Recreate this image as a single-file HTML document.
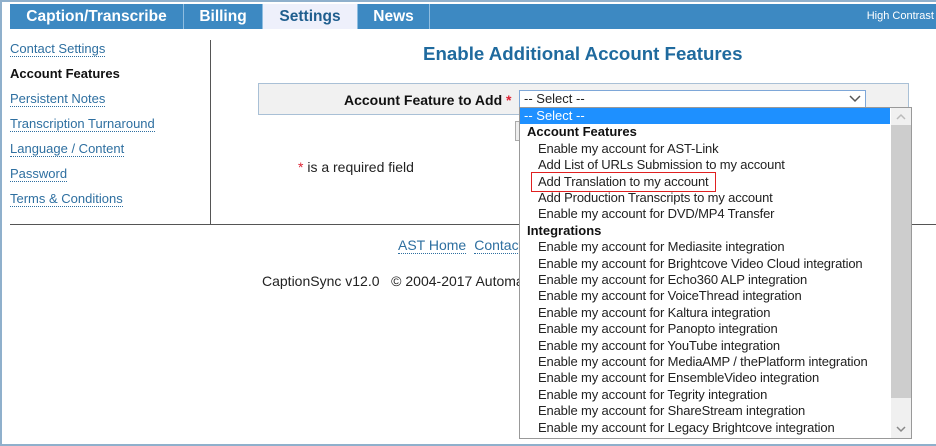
<!DOCTYPE html>
<html><head><style>
*{margin:0;padding:0;box-sizing:border-box}
body{width:936px;height:446px;overflow:hidden;background:#fff;font-family:"Liberation Sans",Arial,sans-serif;position:relative}
.frame{position:absolute;left:0;top:0;width:936px;height:446px;border:2px solid #8fb0cc;border-right:none}
.nav{position:absolute;left:10px;top:4px;width:926px;height:25px;background:#3d89c2}
.tab{position:absolute;top:0;height:25px;color:#fff;font-weight:bold;font-size:15.5px;line-height:25px;text-align:center;border-right:1px solid #8fbde0}
.tab.sel{background:#eef0fb;color:#1f5e8e}
.hc{position:absolute;right:2px;top:0;line-height:25px;color:#fff;font-size:11px}
.side{position:absolute;left:10px;font-size:13px;color:#2e6fa0;border-bottom:1px dotted #2e6fa0;line-height:14px}
.vline{position:absolute;left:210px;top:40px;width:1px;height:184px;background:#555}
.hline{position:absolute;left:10px;top:224px;width:926px;height:1px;background:#555}
h1{position:absolute;left:423px;top:43px;font-size:18.7px;color:#1f6a9e;font-weight:bold}
.fbox{position:absolute;left:258px;top:83px;width:651px;height:32px;background:#f1f1f1;border:1px solid #a9c0d6}
.lbl{position:absolute;left:344px;top:92px;font-size:14px;font-weight:bold;color:#111}
.star{color:#d23}
.sel1{position:absolute;left:519px;top:90px;width:347px;height:18px;border:1px solid #7ea7d8;background:#fff;font-size:13px;line-height:16px;padding-left:4px;color:#222}
.btn{position:absolute;left:515px;top:121px;width:6px;height:20px;border:1px solid #aaa;background:#eee}
.req{position:absolute;left:298px;top:159px;font-size:14px;color:#222}
.foot1{position:absolute;left:398px;top:237px;font-size:14px;color:#2e6fa0}
.foot1 span{border-bottom:1px dotted #2e6fa0;margin-right:8px}
.foot2{position:absolute;left:262px;top:273px;font-size:14px;color:#222}
.dd{position:absolute;left:519px;top:107px;width:393px;height:332px;background:#fff;border:1px solid #999}
.row{position:absolute;left:0;height:16.4px;font-size:13px;line-height:16px;color:#222;white-space:nowrap;letter-spacing:-0.15px}
.row.g{font-weight:bold;padding-left:7px;color:#111;letter-spacing:0}
.row.i{padding-left:18px}
.row.h{background:#1e90ff;color:#fff;padding-left:4px;width:370px;letter-spacing:0}
.sb{position:absolute;left:371px;top:0;width:20px;height:330px;background:#f0f0f0}
.th{position:absolute;left:371px;top:17px;width:20px;height:273px;background:#cdcdcd}
.redbox{position:absolute;left:531px;top:172px;width:185px;height:20px;border:1.5px solid #e02020}
</style></head><body>
<div class="frame"></div>
<div class="nav">
<div class="tab" style="left:0;width:174px">Caption/Transcribe</div>
<div class="tab" style="left:174px;width:79px">Billing</div>
<div class="tab sel" style="left:253px;width:95px">Settings</div>
<div class="tab" style="left:348px;width:72px">News</div>
<div class="hc">High Contrast</div>
</div>
<div class="side" style="top:42px">Contact Settings</div>
<div class="side" style="top:67px;color:#111;font-weight:bold;border:none">Account Features</div>
<div class="side" style="top:92px">Persistent Notes</div>
<div class="side" style="top:117px">Transcription Turnaround</div>
<div class="side" style="top:142px">Language / Content</div>
<div class="side" style="top:167px">Password</div>
<div class="side" style="top:192px">Terms &amp; Conditions</div>
<div class="vline"></div><div class="hline"></div>
<h1>Enable Additional Account Features</h1>
<div class="fbox"></div>
<div class="lbl">Account Feature to Add <span class="star">*</span></div>
<div class="sel1">-- Select --<svg style="position:absolute;right:4px;top:4px" width="12" height="8"><path d="M1 1 L6 6 L11 1" stroke="#555" stroke-width="1.5" fill="none"/></svg></div>
<div class="btn"></div>
<div class="req"><span class="star">*</span> is a required field</div>
<div class="foot1"><span>AST Home</span><span>Contact</span></div>
<div class="foot2">CaptionSync v12.0 &nbsp; © 2004-2017 Automatic Sync Technologies</div>
<div class="dd">
<div class="sb"></div><div class="th"></div>
<svg style="position:absolute;left:376px;top:5px" width="10" height="7"><path d="M1 6 L5 2 L9 6" stroke="#bbb" stroke-width="1.5" fill="none"/></svg>
<svg style="position:absolute;left:376px;top:318px" width="10" height="7"><path d="M1 1 L5 5 L9 1" stroke="#888" stroke-width="1.5" fill="none"/></svg>
<div class="row h" style="top:0">-- Select --</div>
<div class="row g" style="top:16.4px">Account Features</div>
<div class="row i" style="top:32.8px">Enable my account for AST-Link</div>
<div class="row i" style="top:49.2px">Add List of URLs Submission to my account</div>
<div class="row i" style="top:65.6px">Add Translation to my account</div>
<div class="row i" style="top:82px">Add Production Transcripts to my account</div>
<div class="row i" style="top:98.4px">Enable my account for DVD/MP4 Transfer</div>
<div class="row g" style="top:114.8px">Integrations</div>
<div class="row i" style="top:131.2px">Enable my account for Mediasite integration</div>
<div class="row i" style="top:147.6px">Enable my account for Brightcove Video Cloud integration</div>
<div class="row i" style="top:164px">Enable my account for Echo360 ALP integration</div>
<div class="row i" style="top:180.4px">Enable my account for VoiceThread integration</div>
<div class="row i" style="top:196.8px">Enable my account for Kaltura integration</div>
<div class="row i" style="top:213.2px">Enable my account for Panopto integration</div>
<div class="row i" style="top:229.6px">Enable my account for YouTube integration</div>
<div class="row i" style="top:246px">Enable my account for MediaAMP / thePlatform integration</div>
<div class="row i" style="top:262.4px">Enable my account for EnsembleVideo integration</div>
<div class="row i" style="top:278.8px">Enable my account for Tegrity integration</div>
<div class="row i" style="top:295.2px">Enable my account for ShareStream integration</div>
<div class="row i" style="top:311.6px">Enable my account for Legacy Brightcove integration</div>
</div>
<div class="redbox"></div>
</body></html>
